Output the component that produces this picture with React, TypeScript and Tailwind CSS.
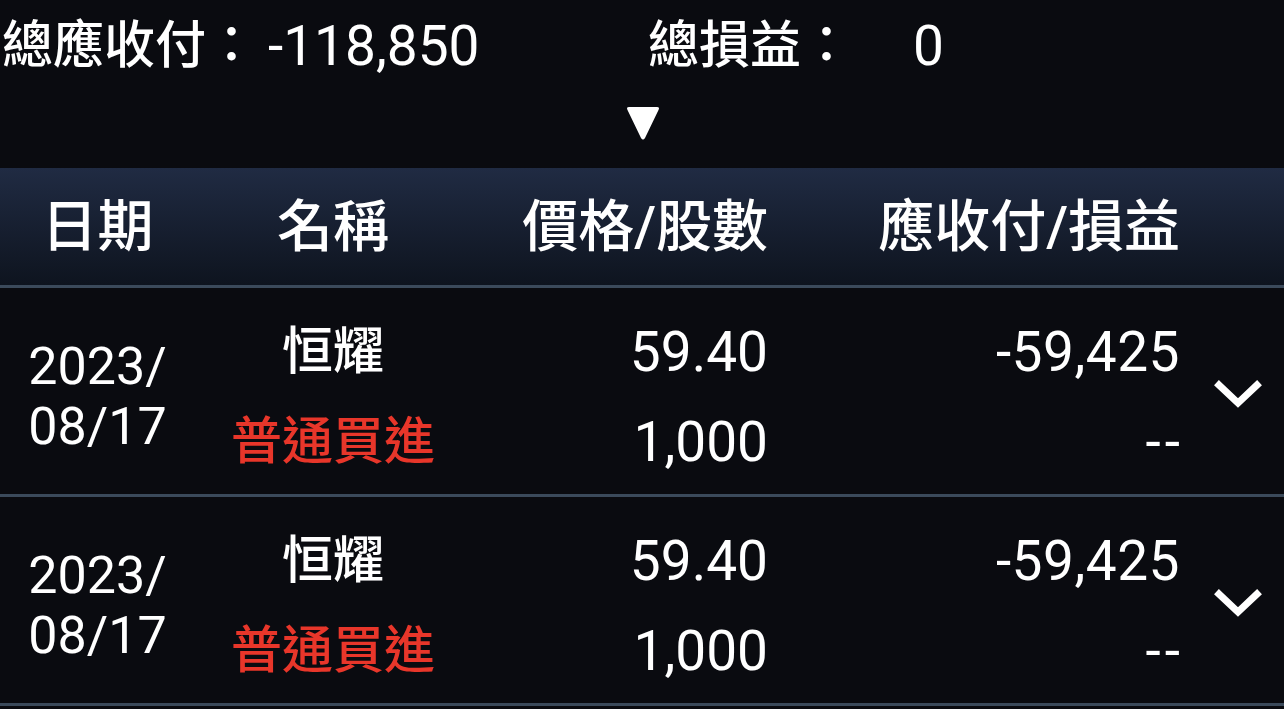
import React from "react"

interface Trade {
  date: [string, string]
  name: string
  side: string
  price: string
  qty: string
  amount: string
  pnl: string
}

const trades: Trade[] = [
  { date: ["2023/", "08/17"], name: "恒耀", side: "普通買進", price: "59.40", qty: "1,000", amount: "-59,425", pnl: "--" },
  { date: ["2023/", "08/17"], name: "恒耀", side: "普通買進", price: "59.40", qty: "1,000", amount: "-59,425", pnl: "--" },
]

const cols = "grid grid-cols-[195px_276px_297px_412px_104px]"

function Chevron() {
  return (
    <svg width="48" height="30" viewBox="0 0 48 30" fill="none">
      <polyline points="5,5 24,23 43,5" stroke="white" strokeWidth="7" strokeLinecap="square" strokeLinejoin="miter" />
    </svg>
  )
}

function TradeRow({ t }: { t: Trade }) {
  return (
    <div className={`${cols} h-[209px] border-b-[3px] border-[#3b4a5b] items-center`}>
      <div className="flex flex-col items-center text-[52px] leading-[60px] pt-3">
        <span>{t.date[0]}</span>
        <span>{t.date[1]}</span>
      </div>
      <div className="flex flex-col items-center text-[51px] leading-[90px] font-medium pt-3">
        <span>{t.name}</span>
        <span className="text-[#e8362a]">{t.side}</span>
      </div>
      <div className="flex flex-col items-end text-[55px] leading-[90px] pt-3">
        <span>{t.price}</span>
        <span>{t.qty}</span>
      </div>
      <div className="flex flex-col items-end text-[55px] leading-[90px] pt-3 tracking-[0.5px]">
        <span>{t.amount}</span>
        <span className="tracking-[4px] -mr-[4px]">{t.pnl}</span>
      </div>
      <div className="flex justify-center pt-2 pl-3">
        <Chevron />
      </div>
    </div>
  )
}

export default function App() {
  return (
    <div className="w-[1284px] h-[709px] overflow-hidden bg-[#0a0b10] text-white font-['Roboto','Noto_Sans_CJK_TC',sans-serif]">
      <div className="flex items-center h-[92px] text-[51px] font-medium">
        <span className="pl-[2px] w-[268px]">總應收付：</span>
        <span className="w-[380px] text-[55px] font-normal">-118,850</span>
        <span className="w-[265px]">總損益：</span>
        <span className="text-[55px] font-normal">0</span>
      </div>
      <div className="flex justify-center h-[76px] pt-[13px] pl-[2px]">
        <svg width="36" height="36" viewBox="0 0 36 36">
          <path d="M4 2 H32 Q35 2 33.5 5 L20 33 Q18 36 16 33 L2.5 5 Q1 2 4 2 Z" fill="white" />
        </svg>
      </div>
      <div className={`${cols} h-[120px] items-center bg-gradient-to-b from-[#202b43] to-[#0e141f] border-b-[3px] border-[#3b4a5b] text-[56px] font-medium`}>
        <span className="text-center">日期</span>
        <span className="text-center">名稱</span>
        <span className="text-right">價格/股數</span>
        <span className="text-right">應收付/損益</span>
        <span />
      </div>
      {trades.map((t, i) => (
        <TradeRow key={i} t={t} />
      ))}
    </div>
  )
}
